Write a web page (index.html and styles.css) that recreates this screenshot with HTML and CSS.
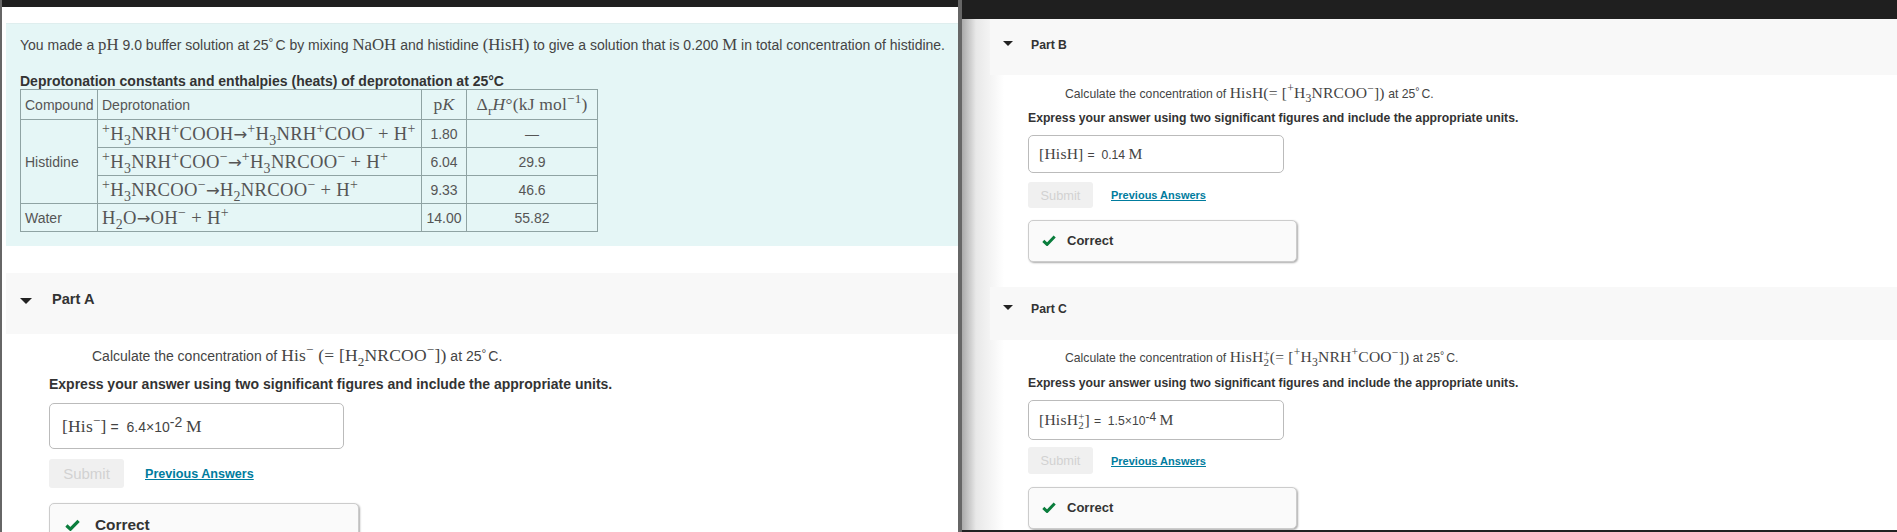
FILE: index.html
```html
<!DOCTYPE html>
<html lang="en">
<head>
<meta charset="utf-8">
<title>Histidine buffer</title>
<link rel="stylesheet" href="styles.css">
</head>
<body>
<div class="screen">
  <main class="pane left">
    <div class="bar"></div>
    <section class="intro">
      <p class="lead">You made a <span class="m big">pH</span> 9.0 buffer solution at 25<sup class="deg">°</sup>C by mixing <span class="m big">NaOH</span> and histidine <span class="m big">(HisH)</span> to give a solution that is 0.200 <span class="m big">M</span> in total concentration of histidine.</p>
      <h2 class="caption">Deprotonation constants and enthalpies (heats) of deprotonation at 25°C</h2>
      <table class="data">
        <colgroup><col class="c1"><col class="c2"><col class="c3"><col class="c4"></colgroup>
        <tr class="r-head"><td>Compound</td><td>Deprotonation</td><td class="ctr m big">p<i>K</i></td><td class="ctr m big">Δ<sub>r</sub><i>H</i>°(kJ mol<sup>−1</sup>)</td></tr>
        <tr><td rowspan="3">Histidine</td><td class="m eq"><sup>+</sup>H<sub>3</sub>NRH<sup>+</sup>COOH<span class="arrow">→</span><sup>+</sup>H<sub>3</sub>NRH<sup>+</sup>COO<sup>−</sup> + H<sup>+</sup></td><td class="ctr">1.80</td><td class="ctr">—</td></tr>
        <tr><td class="m eq"><sup>+</sup>H<sub>3</sub>NRH<sup>+</sup>COO<sup>−</sup><span class="arrow">→</span><sup>+</sup>H<sub>3</sub>NRCOO<sup>−</sup> + H<sup>+</sup></td><td class="ctr">6.04</td><td class="ctr">29.9</td></tr>
        <tr><td class="m eq"><sup>+</sup>H<sub>3</sub>NRCOO<sup>−</sup><span class="arrow">→</span>H<sub>2</sub>NRCOO<sup>−</sup> + H<sup>+</sup></td><td class="ctr">9.33</td><td class="ctr">46.6</td></tr>
        <tr><td>Water</td><td class="m eq">H<sub>2</sub>O<span class="arrow">→</span>OH<sup>−</sup> + H<sup>+</sup></td><td class="ctr">14.00</td><td class="ctr">55.82</td></tr>
      </table>
    </section>
    <section class="part part-a">
      <header class="part-head"><span class="caret"></span><span class="part-name">Part A</span></header>
      <div class="part-body">
        <p class="question">Calculate the concentration of <span class="m big">His<sup>−</sup> (= [H<sub>2</sub>NRCOO<sup>−</sup>])</span> at 25<sup class="deg">°</sup>C.</p>
        <p class="instr">Express your answer using two significant figures and include the appropriate units.</p>
        <div class="answer"><span class="m big">[His<sup>−</sup>]</span><span>= &nbsp;6.4×10<sup class="exp">-2</sup> <span class="m big">M</span></span></div>
        <div class="actions"><button class="submit" disabled>Submit</button><a class="prev" href="#">Previous Answers</a></div>
        <div class="result"><svg class="check" viewBox="0 0 16 12"><path d="M1.5 6.5 5.8 10.5 14.5 1.5" fill="none" stroke="#0a7d3c" stroke-width="3.4"/></svg><span>Correct</span></div>
      </div>
    </section>
  </main>
  <div class="pane right">
    <div class="bar"></div>
    <section class="part part-b">
      <header class="part-head"><span class="caret"></span><span class="part-name">Part B</span></header>
      <div class="part-body">
        <p class="question">Calculate the concentration of <span class="m big">HisH(= [<sup>+</sup>H<sub>3</sub>NRCOO<sup>−</sup>])</span> at 25<sup class="deg">°</sup>C.</p>
        <p class="instr">Express your answer using two significant figures and include the appropriate units.</p>
        <div class="answer"><span class="m big">[HisH]</span><span>= &nbsp;0.14 <span class="m big">M</span></span></div>
        <div class="actions"><button class="submit" disabled>Submit</button><a class="prev" href="#">Previous Answers</a></div>
        <div class="result"><svg class="check" viewBox="0 0 16 12"><path d="M1.5 6.5 5.8 10.5 14.5 1.5" fill="none" stroke="#0a7d3c" stroke-width="3.4"/></svg><span>Correct</span></div>
      </div>
    </section>
    <section class="part part-c">
      <header class="part-head"><span class="caret"></span><span class="part-name">Part C</span></header>
      <div class="part-body">
        <p class="question">Calculate the concentration of <span class="m big">HisH<span class="stack"><sup>+</sup><sub>2</sub></span>(= [<sup>+</sup>H<sub>3</sub>NRH<sup>+</sup>COO<sup>−</sup>])</span> at 25<sup class="deg">°</sup>C.</p>
        <p class="instr">Express your answer using two significant figures and include the appropriate units.</p>
        <div class="answer"><span class="m big">[HisH<span class="stack"><sup>+</sup><sub>2</sub></span>]</span><span>= &nbsp;1.5×10<sup class="exp">-4</sup> <span class="m big">M</span></span></div>
        <div class="actions"><button class="submit" disabled>Submit</button><a class="prev" href="#">Previous Answers</a></div>
        <div class="result"><svg class="check" viewBox="0 0 16 12"><path d="M1.5 6.5 5.8 10.5 14.5 1.5" fill="none" stroke="#0a7d3c" stroke-width="3.4"/></svg><span>Correct</span></div>
      </div>
    </section>
  </div>
</div>
</body>
</html>
```

FILE: styles.css
```css
* { box-sizing: border-box; }
html, body { margin: 0; height: 100%; overflow: hidden; background: #fff; }
body { font-family: "Liberation Sans", Arial, sans-serif; color: #444; font-size: 14px; }
p, h2 { margin: 0; }

.screen { display: flex; width: 1897px; height: 532px; overflow: hidden; }
.pane { height: 532px; overflow: hidden; }
.left { width: 962px; border-left: 2px solid #666; border-right: 4px solid #666; padding-left: 4px; }
.right {
  flex: 1;
  border-bottom: 2px solid #222;
  background: linear-gradient(to right, #aaa 0, #e8e8e8 14px, #fff 42px);
}
.bar { background: #1f1f1f; }
.left .bar { height: 7px; margin-left: -6px; margin-right: -4px; }
.right .bar { height: 19px; }

sup, sub { font-size: 75%; line-height: 0; }
.m { font-family: "Liberation Serif", "Times New Roman", serif; }
.big { font-size: 17.5px; letter-spacing: 0.2px; }
.eq { font-size: 18.6px; letter-spacing: 0.3px; }
.arrow { font-family: "DejaVu Sans", sans-serif; font-size: 14px; }
.eq .arrow { font-size: 16.5px; letter-spacing: 0; }
.deg { font-size: 12px; vertical-align: 3px; padding-right: 2px; }
.exp { font-size: 14px; vertical-align: 5px; }
.stack { display: inline-flex; flex-direction: column; vertical-align: middle; font-size: 11px; line-height: 9px; }
.stack sup, .stack sub { font-size: 11px; line-height: 9px; vertical-align: baseline; }

.intro { background: #e5f6f6; height: 223px; margin-top: 16px; padding: 12px 0 0 14px; border-top: 1px solid #dfeeee; }
.lead { line-height: 18px; white-space: nowrap; font-size: 14px; }
.lead .big { font-size: 16.8px; letter-spacing: 0; }
.caption { font-size: 14px; line-height: 16px; margin-top: 19px; color: #333; font-weight: bold; }
.data { border-collapse: collapse; table-layout: fixed; width: 577px; margin-top: 0; color: #555; background: #e5f6f6; }
.data td { border: 1px solid #8fa3a3; padding: 0 4px; height: 28px; white-space: nowrap; }
.data td.eq { padding: 0 0 0 4px; }
.data .r-head td { height: 30px; }
.c1 { width: 77px; } .c2 { width: 324px; } .c3 { width: 45px; } .c4 { width: 131px; }
.ctr { text-align: center; }

.part-head { background: #f8f8f8; display: flex; align-items: flex-start; }
.caret { width: 0; height: 0; border-left: 6px solid transparent; border-right: 6px solid transparent; border-top: 6px solid #222; }
.part-name { font-weight: bold; color: #333; }
.question { white-space: nowrap; }
.instr { font-weight: bold; color: #333; white-space: nowrap; }
.answer { background: #fff; border: 1px solid #bbb; border-radius: 5px; white-space: nowrap; display: flex; align-items: center; gap: 4px; }
.actions { display: flex; align-items: center; }
.submit { border: 0; background: #f0f0f0; color: #d2d2d2; font-family: inherit; border-radius: 3px; padding: 0; }
.prev { color: #007c9e; font-weight: bold; text-decoration: underline; }
.result { background: #fafafa; border: 1px solid #ccc; border-radius: 5px; box-shadow: 1px 1px 2px #aaa; display: flex; align-items: center; color: #333; font-weight: bold; }
.check { display: block; }

/* Part A : larger scale */
.part-a { margin-top: 27px; }
.part-a .part-head { height: 61px; padding: 18px 0 0 14px; }
.part-a .caret { margin-top: 7px; }
.part-a .part-name { margin-left: 20px; font-size: 14.6px; line-height: 17px; }
.part-a .part-body { padding: 11px 0 0 43px; }
.part-a .question { padding-left: 43px; line-height: 20px; }
.part-a .instr { margin-top: 8px; line-height: 20px; }
.part-a .answer { width: 295px; height: 46px; margin-top: 9px; padding-left: 12px; }
.part-a .actions { margin-top: 10px; gap: 21px; }
.part-a .submit { width: 75px; height: 29px; font-size: 15px; }
.part-a .prev { font-size: 12.6px; }
.part-a .result { width: 310px; height: 44px; margin-top: 15px; padding: 0 0 0 15px; gap: 15px; font-size: 15.4px; }
.part-a .check { width: 15px; height: 12px; }

/* Parts B, C : smaller scale */
.right .part { font-size: 12.2px; }
.right .big { font-size: 15.6px; }
.right .arrow { font-size: 12px; }
.right .deg { font-size: 10.5px; }
.right .exp { font-size: 12px; vertical-align: 4px; }
.right .part-head { margin-left: 28px; padding: 19px 0 0 13px; }
.right .caret { margin-top: 3px; border-left-width: 5.5px; border-right-width: 5.5px; border-top-width: 5px; }
.right .part-name { margin-left: 18px; font-size: 12.2px; line-height: 14px; }
.right .part-body { padding-left: 66px; }
.right .question { padding-left: 37px; line-height: 18px; }
.right .instr { line-height: 18px; }
.right .answer { width: 256px; margin-top: 8px; padding-left: 10px; }
.right .actions { gap: 18px; }
.right .submit { width: 65px; font-size: 12.8px; }
.right .prev { font-size: 11px; }
.right .result { width: 269px; padding: 0 0 2px 13px; gap: 11px; font-size: 13px; }
.right .check { width: 14px; height: 11px; }

.part-b .part-head { height: 56px; }
.part-b .part-body { padding-top: 9px; }
.part-b .instr { margin-top: 6px; }
.part-b .answer { height: 38px; }
.part-b .actions { margin-top: 9px; }
.part-b .submit { height: 26px; }
.part-b .result { height: 42px; margin-top: 12px; }

.part-c .part-head { height: 53px; margin-top: 25px; padding-top: 15px; }
.part-c .part-body { padding-top: 8px; }
.part-c .instr { margin-top: 7px; }
.part-c .answer { height: 40px; margin-top: 8px; }
.part-c .actions { margin-top: 7px; }
.part-c .submit { height: 27px; }
.part-c .result { height: 42px; margin-top: 13px; }
```
